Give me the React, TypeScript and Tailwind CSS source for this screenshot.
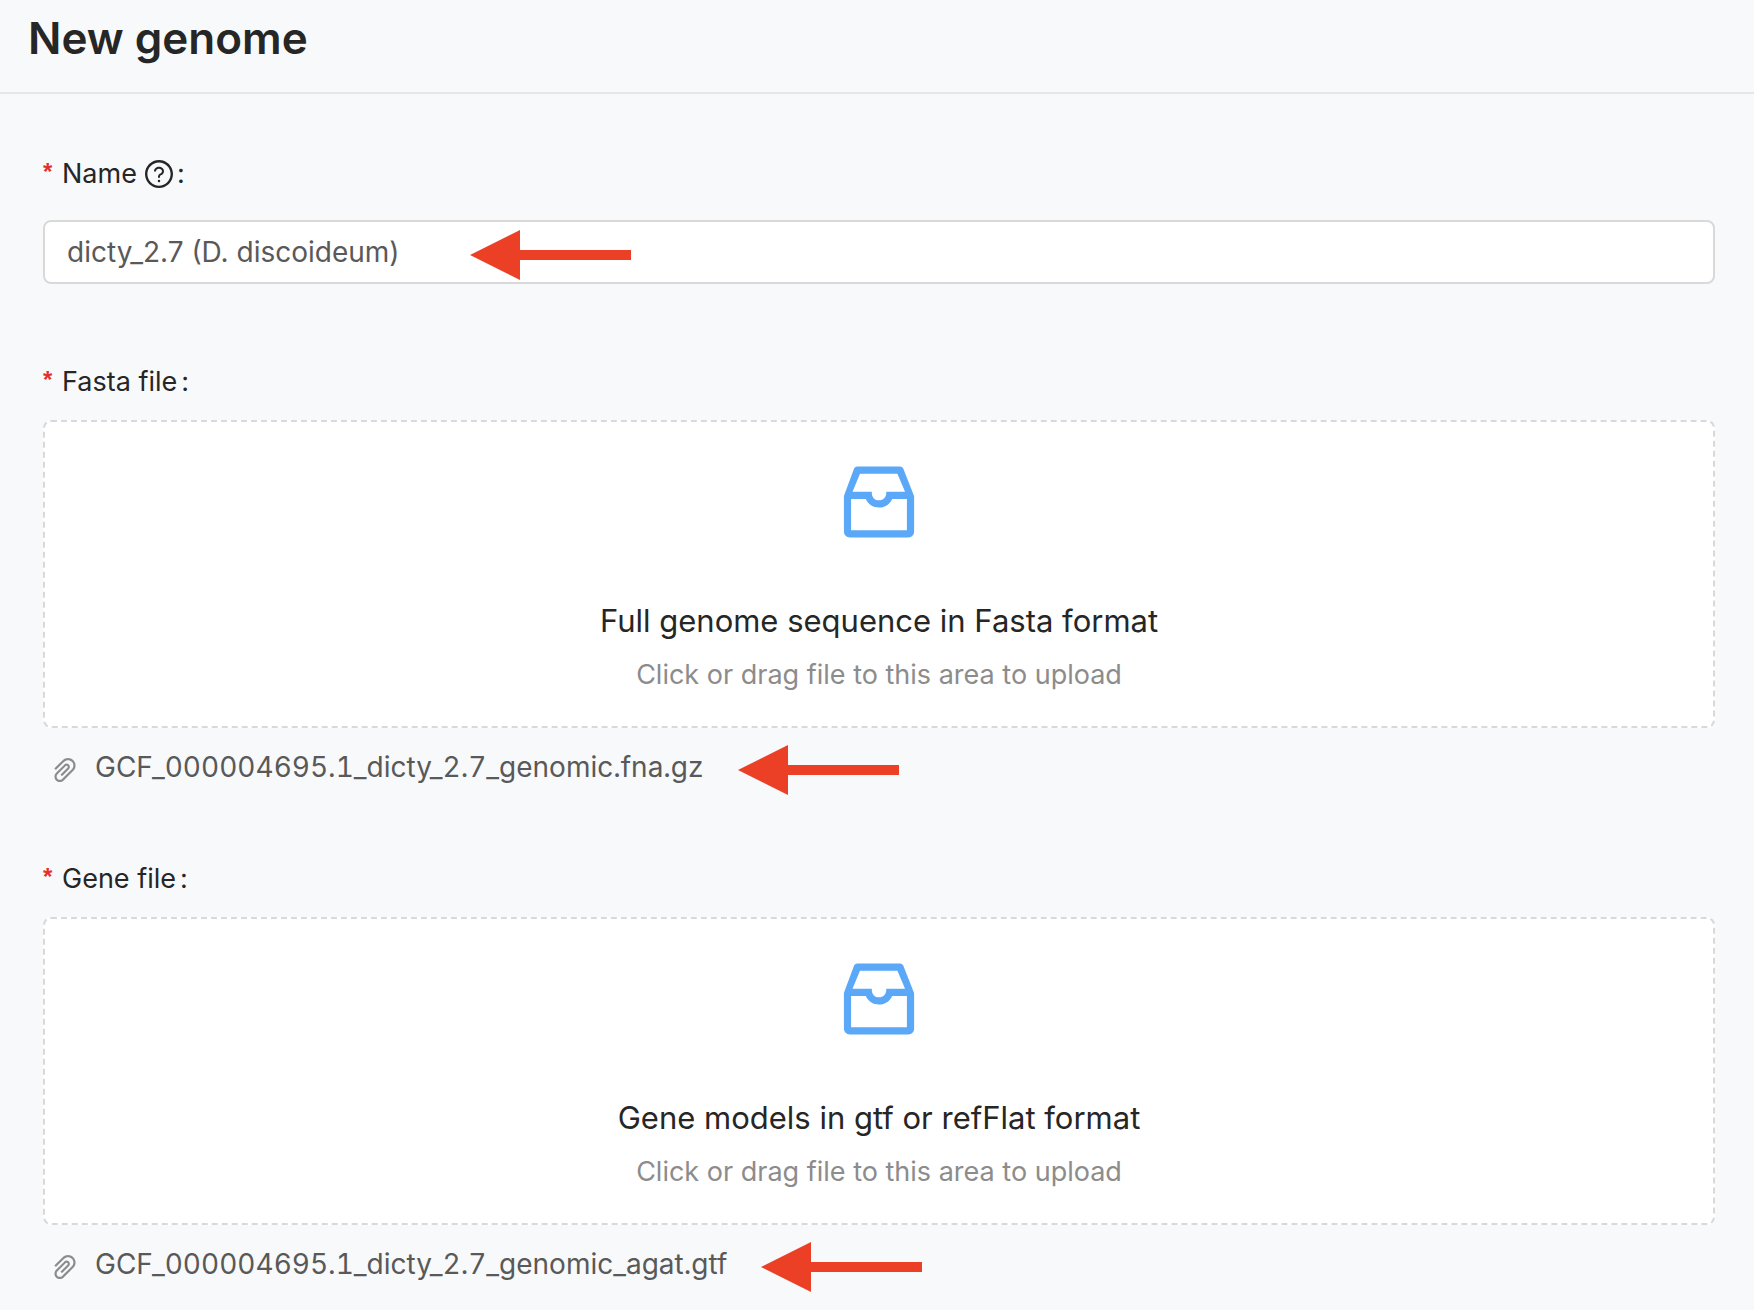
import type { ReactNode } from 'react'
import { AiOutlineInbox, AiOutlinePaperClip, AiOutlineQuestionCircle } from 'react-icons/ai'

const uploads = [
  {
    id: 'fasta',
    label: 'Fasta file',
    title: 'Full genome sequence in Fasta format',
    file: 'GCF_000004695.1_dicty_2.7_genomic.fna.gz',
  },
  {
    id: 'gene',
    label: 'Gene file',
    title: 'Gene models in gtf or refFlat format',
    file: 'GCF_000004695.1_dicty_2.7_genomic_agat.gtf',
  },
]

function Arrow({ className = '' }: { className?: string }) {
  return (
    <svg viewBox="0 0 161 50" className={`h-[50px] w-[161px] shrink-0 fill-[#eb4026] ${className}`} aria-hidden="true">
      <path d="M0 25 50 0V20H161V30H50V50Z" />
    </svg>
  )
}

function FieldLabel({ htmlFor, children }: { htmlFor: string; children: ReactNode }) {
  return (
    <label htmlFor={htmlFor} className="flex h-11 items-center text-[27px] text-[#262626]">
      <span className="w-[19px] shrink-0 pb-1 font-['Liberation_Sans',sans-serif] text-2xl font-bold text-[#e5302c]">*</span>
      {children}
      <span className="ml-1">:</span>
    </label>
  )
}

function UploadField({ id, label, title, file }: (typeof uploads)[number]) {
  return (
    <div>
      <FieldLabel htmlFor={id}>{label}</FieldLabel>
      <label
        htmlFor={id}
        className="mt-4 flex cursor-pointer flex-col items-center rounded-lg border-2 border-dashed border-[#d9d9d9] bg-white pt-8 pb-[26px]"
      >
        <AiOutlineInbox className="size-24 text-[#5ba8f8]" />
        <span className="mt-[46px] text-[31px] leading-[50px] text-[#262626]">{title}</span>
        <span className="mt-1 text-[27px] leading-[50px] text-[#8c8c8c]">Click or drag file to this area to upload</span>
        <input id={id} type="file" className="sr-only" />
      </label>
      <div className="mt-[17px] flex h-[50px] items-center">
        <AiOutlinePaperClip className="ml-1.5 size-8 shrink-0 text-[#8c8c8c]" />
        <span className="ml-3.5 pb-1.5 text-[28px] text-[#595959] tabular-nums">{file}</span>
        <Arrow className="ml-[34px]" />
      </div>
    </div>
  )
}

export default function App() {
  return (
    <main className="min-h-screen bg-[#f8f9fb] font-[Inter,sans-serif]">
      <header className="border-b-2 border-[#e6e7e9] px-7 pt-3.5 pb-[30px]">
        <h1 className="text-[44px] leading-[48px] font-semibold text-[#262626]">New genome</h1>
      </header>
      <form className="flex flex-col gap-[62px] pt-[58px] pr-[39px] pl-[43px]">
        <div className="pb-3.5">
          <FieldLabel htmlFor="name">
            Name
            <AiOutlineQuestionCircle className="-mr-0.5 ml-1.5 size-8" />
          </FieldLabel>
          <div className="relative mt-6">
            <input
              id="name"
              type="text"
              defaultValue="dicty_2.7 (D. discoideum)"
              className="block h-16 w-full rounded-lg border-2 border-[#d9d9d9] bg-white px-[22px] text-[28px] text-[#595959] outline-none"
            />
            <Arrow className="pointer-events-none absolute top-[10px] left-[427px]" />
          </div>
        </div>
        {uploads.map((upload) => (
          <UploadField key={upload.id} {...upload} />
        ))}
      </form>
    </main>
  )
}
